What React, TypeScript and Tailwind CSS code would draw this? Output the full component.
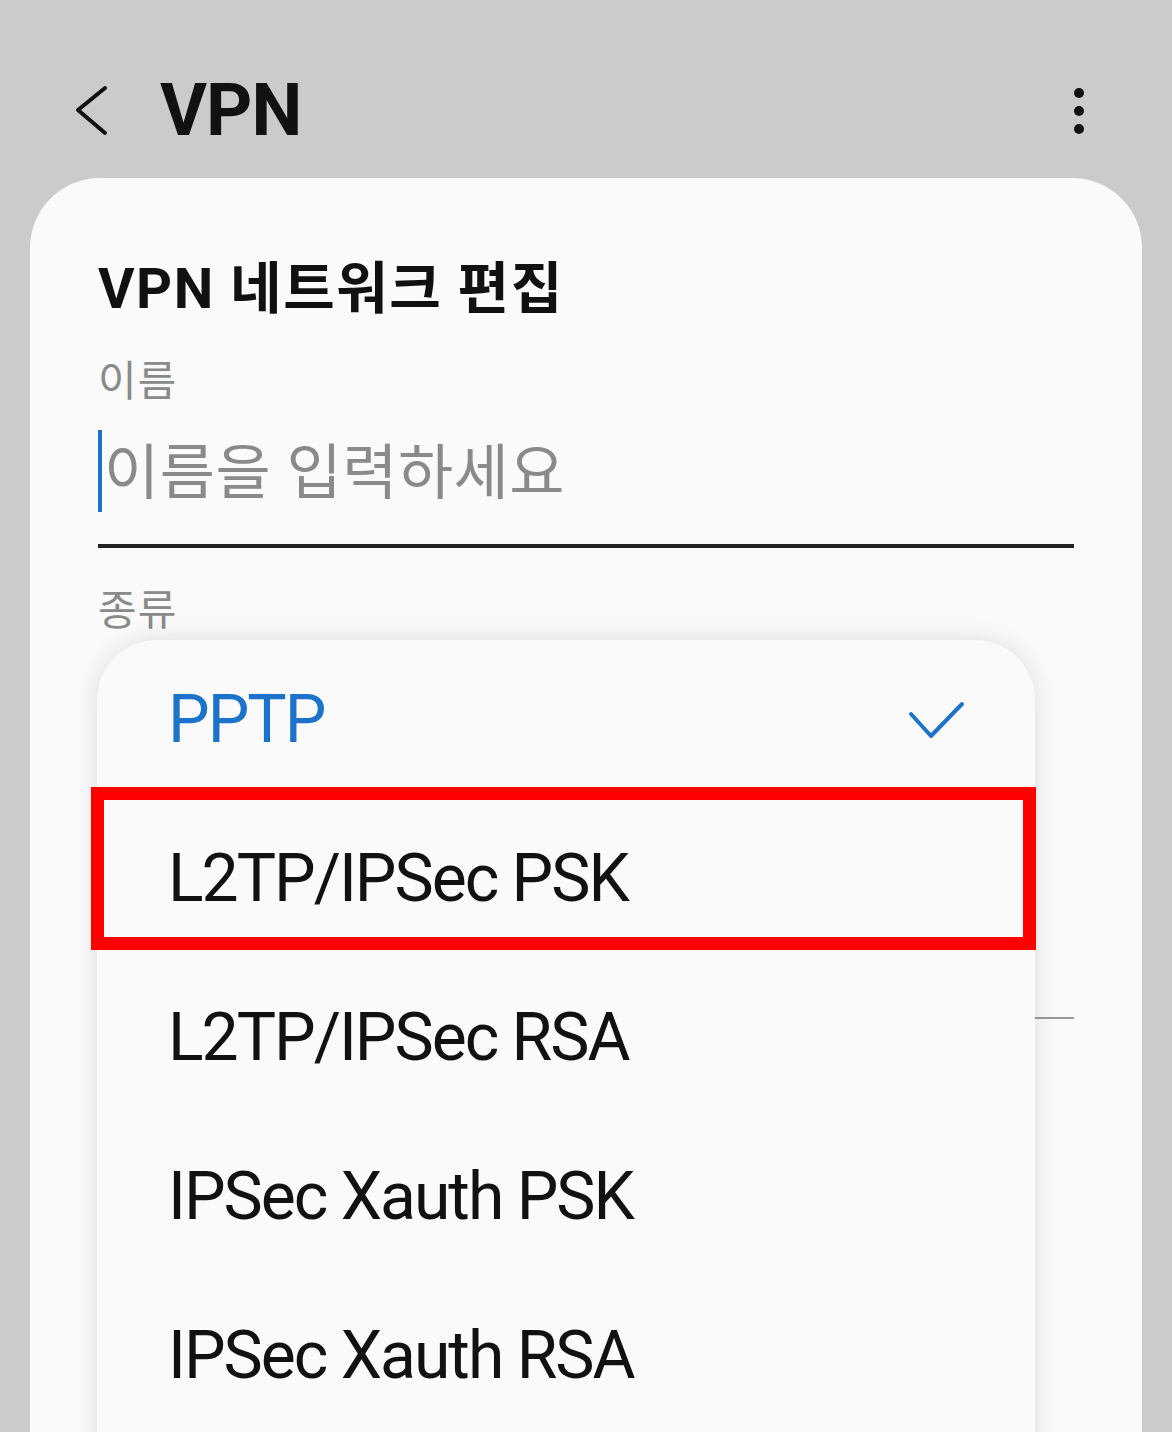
const latin = { fontFamily: 'Roboto, "Noto Sans CJK KR", sans-serif' };

const options = ['PPTP', 'L2TP/IPSec PSK', 'L2TP/IPSec RSA', 'IPSec Xauth PSK', 'IPSec Xauth RSA'];

function Header() {
  return (
    <div className="flex h-[178px] shrink-0 items-center pl-[72px] pr-[88px] pt-[44px]">
      <svg width="40" height="56" viewBox="0 0 40 56" className="shrink-0">
        <path d="M33 5 L6 27 L33 50" fill="none" stroke="#111" strokeWidth="4" strokeLinecap="round" strokeLinejoin="round" />
      </svg>
      <h1 className="ml-[48px] text-[72px] font-bold leading-none tracking-[-1px] text-[#111]" style={latin}>
        VPN
      </h1>
      <div className="ml-auto flex flex-col items-center gap-[8px]">
        <span className="h-[10px] w-[10px] rounded-full bg-[#111]" />
        <span className="h-[10px] w-[10px] rounded-full bg-[#111]" />
        <span className="h-[10px] w-[10px] rounded-full bg-[#111]" />
      </div>
    </div>
  );
}

function Dropdown() {
  return (
    <div className="absolute left-[67px] top-[462px] w-[938px] rounded-t-[60px] bg-[#fafafa] pb-[40px] shadow-[0_0_24px_rgba(0,0,0,0.12)]">
      {options.map((opt, i) => (
        <div key={opt} className="relative flex h-[159px] items-center pl-[71px] pr-[68px]">
          <span
            className={`text-[66px] leading-none tracking-[-2px] ${i === 0 ? 'text-[#1d73c9]' : 'text-[#111]'}`}
            style={latin}
          >
            {opt}
          </span>
          {i === 0 && (
            <svg width="60" height="44" viewBox="0 0 60 44" className="ml-auto">
              <path d="M4 16 L24 38 L55 6" fill="none" stroke="#1d73c9" strokeWidth="4" strokeLinecap="round" strokeLinejoin="round" />
            </svg>
          )}
          {i === 1 && (
            <div className="pointer-events-none absolute left-[-6px] right-[-1px] top-[-12px] bottom-[8px] border-[13px] border-[#ff0000]" />
          )}
        </div>
      ))}
    </div>
  );
}

export default function App() {
  return (
    <div className="flex h-[1432px] w-[1172px] flex-col overflow-hidden bg-[#cbcbcb]" style={latin}>
      <Header />
      <div className="relative mx-[30px] flex-1 rounded-t-[70px] bg-[#fafafa] pl-[68px] pr-[68px] pt-[83px]">
        <h2 className="text-[56px] font-bold leading-none tracking-[1.5px] text-[#111]">VPN 네트워크 편집</h2>
        <div className="mt-[44px] text-[42px] leading-none tracking-[1px] text-[#8a8a8a]">이름</div>
        <div className="mt-[27px] flex h-[82px] items-center">
          <span className="h-[82px] w-[4px] bg-[#1d73c9]" />
          <span className="ml-[2px] pt-[6px] text-[60px] leading-none tracking-[0.5px] text-[#8a8a8a]">이름을 입력하세요</span>
        </div>
        <div className="mt-[32px] h-[4px] bg-[#222]" />
        <div className="mt-[42px] text-[42px] leading-none tracking-[1px] text-[#8a8a8a]">종류</div>
        <div className="mt-[385px] h-[2px] bg-[#9a9a9a]" />
        <Dropdown />
      </div>
    </div>
  );
}
